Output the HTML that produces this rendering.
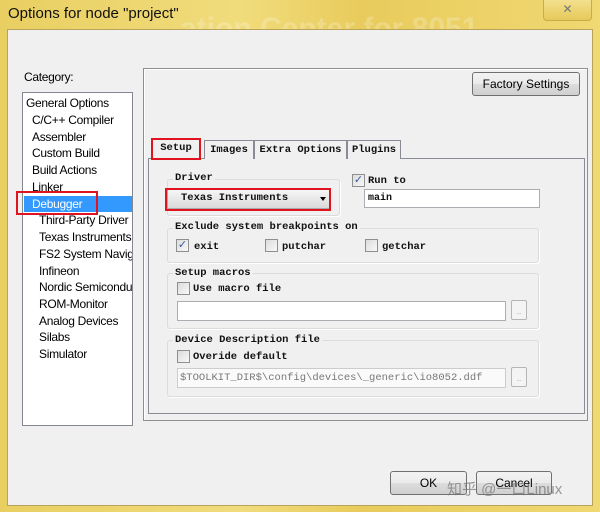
<!DOCTYPE html>
<html><head><meta charset="utf-8">
<style>
*{box-sizing:border-box;margin:0;padding:0}
body{width:600px;height:512px;overflow:hidden;background:linear-gradient(90deg,#e9cf62,#f1dc7c 40%,#e8cb5c 60%,#f0d872);font-family:"Liberation Sans",sans-serif;position:relative}
.a{position:absolute}
.title{left:8px;top:5px;font-size:15px;color:#111}
.ghost{left:180px;top:12px;font-size:30px;font-weight:bold;color:rgba(255,255,255,.22);white-space:nowrap}
.close{left:543px;top:0;width:49px;height:21px;border:1px solid #c8ab4a;border-top:none;border-radius:0 0 4px 4px;background:linear-gradient(#f3e08e,#e6c95a);color:#777;font-size:12px;text-align:center;line-height:19px}
.client{left:7px;top:29px;width:586px;height:477px;background:#f0f0f0;border:1px solid #b9a35a}
.sans{font-size:12px;color:#000;letter-spacing:-.3px}
.list{left:22px;top:92px;width:111px;height:334px;background:#fff;border:1px solid #828790;overflow:hidden}
.item{position:absolute;font-size:12px;white-space:nowrap;letter-spacing:-.3px}
.panel{left:143px;top:68px;width:445px;height:353px;border:1px solid #8e8f8f;box-shadow:inset 1px 1px 0 #fff}
.btn{border:1px solid #707070;border-radius:3px;background:linear-gradient(#f2f2f2 0,#ebebeb 50%,#dddddd 51%,#cfcfcf);text-align:center;font-size:12px}
.m{font-family:"Liberation Mono",monospace;font-size:10.5px;font-weight:bold;color:#111;white-space:nowrap}
.tab{position:absolute;top:140px;height:19px;border:1px solid #898c95;border-bottom:none;background:#f0f0f0;padding-top:3px;text-align:center}
.tp{left:148px;top:158px;width:437px;height:256px;border:1px solid #898c95;background:#f0f0f0}
.grp{border:1px solid #dcdcdc;border-radius:3px;box-shadow:1px 1px 0 #fff}
.lbl{background:#f0f0f0;padding:0 2px}
.cb{width:13px;height:13px;border:1px solid #8f8f8f;background:linear-gradient(135deg,#dcdcdc,#f8f8f8)}
.inp{background:#fff;border:1px solid #abadb3}
.red{border:2px solid #e0141e}
.sm{width:16px;height:20px;border:1px solid #b5b5b5;border-radius:2px;background:#f4f4f4;font-size:8px;color:#999;text-align:center;line-height:22px}
</style></head><body>
<div class="a ghost">ation Center for 8051</div>
<div class="a title">Options for node "project"</div>
<div class="a close">✕</div>
<div class="a client"></div>

<div class="a sans" style="left:24px;top:70px">Category:</div>
<div class="a list">
<div class="item" style="left:3px;top:3px">General Options</div>
<div class="item" style="left:9px;top:20px">C/C++ Compiler</div>
<div class="item" style="left:9px;top:37px">Assembler</div>
<div class="item" style="left:9px;top:53px">Custom Build</div>
<div class="item" style="left:9px;top:70px">Build Actions</div>
<div class="item" style="left:9px;top:87px">Linker</div>
<div class="item" style="left:1px;top:103px;width:108px;height:16px;background:#3399ff"></div>
<div class="item" style="left:9px;top:104px;color:#fff">Debugger</div>
<div class="item" style="left:16px;top:120px">Third-Party Driver</div>
<div class="item" style="left:16px;top:137px">Texas Instruments</div>
<div class="item" style="left:16px;top:154px">FS2 System Navigator</div>
<div class="item" style="left:16px;top:171px">Infineon</div>
<div class="item" style="left:16px;top:187px">Nordic Semiconductor</div>
<div class="item" style="left:16px;top:204px">ROM-Monitor</div>
<div class="item" style="left:16px;top:221px">Analog Devices</div>
<div class="item" style="left:16px;top:237px">Silabs</div>
<div class="item" style="left:16px;top:254px">Simulator</div>
</div>
<div class="a red" style="left:16px;top:191px;width:82px;height:24px"></div>

<div class="a panel"></div>
<div class="a btn" style="left:472px;top:72px;width:108px;height:24px;line-height:22px">Factory Settings</div>

<div class="a tp"></div>
<div class="tab m" style="left:151px;width:50px;top:138px;height:22px;z-index:2">Setup</div>
<div class="tab m" style="left:204px;width:50px">Images</div>
<div class="tab m" style="left:254px;width:93px">Extra Options</div>
<div class="tab m" style="left:347px;width:54px">Plugins</div>
<div class="a red" style="left:151px;top:138px;width:50px;height:22px;z-index:3"></div>

<div class="a grp" style="left:167px;top:179px;width:173px;height:37px"></div>
<div class="a m lbl" style="left:173px;top:172px">Driver</div>
<div class="a" style="left:167px;top:189px;width:163px;height:20px;background:linear-gradient(#f6f6f6,#dadada);border:1px solid #aaa"></div>
<div class="a m" style="left:181px;top:192px">Texas Instruments</div>
<div class="a" style="left:320px;top:197px;border-left:3.5px solid transparent;border-right:3.5px solid transparent;border-top:4px solid #000"></div>
<div class="a red" style="left:165px;top:188px;width:166px;height:23px"></div>
<div class="a cb" style="left:352px;top:174px;font-size:11px;color:#3a5ba0;line-height:11px;text-align:center">✓</div>
<div class="a m" style="left:368px;top:175px">Run to</div>
<div class="a inp" style="left:364px;top:189px;width:176px;height:19px"></div>
<div class="a m" style="left:368px;top:193px;font-size:10px">main</div>

<div class="a grp" style="left:167px;top:228px;width:372px;height:35px"></div>
<div class="a m lbl" style="left:173px;top:221px">Exclude system breakpoints on</div>
<div class="a cb" style="left:176px;top:239px;font-size:11px;color:#3a5ba0;line-height:11px;text-align:center">✓</div>
<div class="a m" style="left:194px;top:241px">exit</div>
<div class="a cb" style="left:265px;top:239px"></div>
<div class="a m" style="left:282px;top:241px">putchar</div>
<div class="a cb" style="left:365px;top:239px"></div>
<div class="a m" style="left:382px;top:241px">getchar</div>

<div class="a grp" style="left:167px;top:273px;width:372px;height:56px"></div>
<div class="a m lbl" style="left:173px;top:267px">Setup macros</div>
<div class="a cb" style="left:177px;top:282px"></div>
<div class="a m" style="left:193px;top:283px">Use macro file</div>
<div class="a inp" style="left:177px;top:301px;width:329px;height:20px"></div>
<div class="a sm" style="left:511px;top:300px">..</div>

<div class="a grp" style="left:167px;top:340px;width:372px;height:57px"></div>
<div class="a m lbl" style="left:173px;top:334px">Device Description file</div>
<div class="a cb" style="left:177px;top:350px"></div>
<div class="a m" style="left:193px;top:351px">Overide default</div>
<div class="a inp" style="left:177px;top:368px;width:329px;height:20px;background:#fafafa;border-color:#ccc"></div>
<div class="a m" style="left:180px;top:372px;color:#777;font-weight:normal">$TOOLKIT_DIR$\config\devices\_generic\io8052.ddf</div>
<div class="a sm" style="left:511px;top:367px">..</div>

<div class="a btn" style="left:390px;top:471px;width:77px;height:24px;line-height:22px">OK</div>
<div class="a btn" style="left:476px;top:471px;width:76px;height:24px;line-height:22px">Cancel</div>
<div class="a" style="left:447px;top:478px;font-size:15px;color:rgba(120,120,120,.75);font-family:'Liberation Sans','Noto Sans CJK SC',sans-serif;white-space:nowrap">知乎 @一口Linux</div>
</body></html>
